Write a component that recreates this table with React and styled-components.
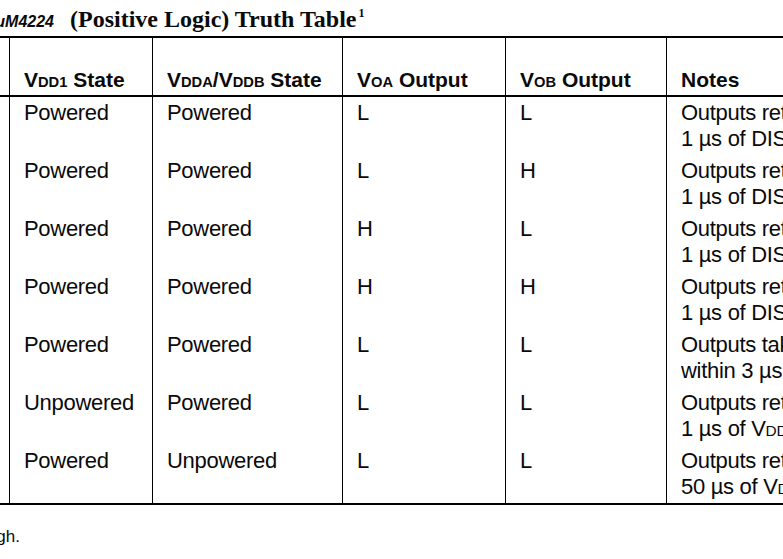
import React from "react";
import styled, { createGlobalStyle } from "styled-components";

const DISABLE_LOW = ["Outputs return to the input state within", "1 µs of DISABLE set low."];

const getRows = () => [
  { vdd1: "Powered", vdda: "Powered", voa: "L", vob: "L", note: DISABLE_LOW },
  { vdd1: "Powered", vdda: "Powered", voa: "L", vob: "H", note: DISABLE_LOW },
  { vdd1: "Powered", vdda: "Powered", voa: "H", vob: "L", note: DISABLE_LOW },
  { vdd1: "Powered", vdda: "Powered", voa: "H", vob: "H", note: DISABLE_LOW },
  { vdd1: "Powered", vdda: "Powered", voa: "L", vob: "L", note: ["Outputs take on default low state", "within 3 µs of DISABLE set high."] },
  { vdd1: "Unpowered", vdda: "Powered", voa: "L", vob: "L", note: ["Outputs return to the input state within", <>1 µs of V<Sub>DD1</Sub> power restoration.</>] },
  { vdd1: "Powered", vdda: "Unpowered", voa: "L", vob: "L", note: ["Outputs return to the input state within", <>50 µs of V<Sub>DDA</Sub>/V<Sub>DDB</Sub> power restoration.</>] },
];

const App = () => {
  const rows = getRows();
  return (
    <>
      <GlobalStyle />
      <Page>
        <Title>
          <PartNo>
            <span>ADuM4224</span>
          </PartNo>
          <Caption>
            (Positive Logic) Truth Table<Sup>1</Sup>
          </Caption>
        </Title>
        <Table>
          <HeadCell $first />
          <HeadCell>
            <span>
              V<Sub>DD1</Sub> State
            </span>
          </HeadCell>
          <HeadCell>
            <span>
              V<Sub>DDA</Sub>/V<Sub>DDB</Sub> State
            </span>
          </HeadCell>
          <HeadCell>
            <span>
              V<Sub>OA</Sub> Output
            </span>
          </HeadCell>
          <HeadCell>
            <span>
              V<Sub>OB</Sub> Output
            </span>
          </HeadCell>
          <HeadCell>
            <span>Notes</span>
          </HeadCell>
          {rows.map((r, i) => (
            <React.Fragment key={i}>
              <Cell $first />
              <Cell>{r.vdd1}</Cell>
              <Cell>{r.vdda}</Cell>
              <Cell>{r.voa}</Cell>
              <Cell>{r.vob}</Cell>
              <Cell>
                {r.note.map((line, j) => (
                  <Line key={j}>{line}</Line>
                ))}
              </Cell>
            </React.Fragment>
          ))}
        </Table>
        <Footnote>
          <span>
            <Sup>1</Sup> L = low, H = high.
          </span>
        </Footnote>
      </Page>
    </>
  );
};

const GlobalStyle = createGlobalStyle`
  html, body {
    margin: 0;
    padding: 0;
    background: #fff;
    overflow: hidden;
  }
  body {
    font-family: "Liberation Sans", Arial, sans-serif;
    color: #0a0a0a;
  }
`;

const Page = styled.div`
  width: 783px;
  height: 559px;
  overflow: hidden;
`;

const Title = styled.div`
  box-sizing: border-box;
  display: flex;
  align-items: baseline;
  gap: 16px;
  height: 36px;
  padding-top: 4px;
  line-height: 30px;
`;

const PartNo = styled.div`
  width: 54px;
  display: flex;
  justify-content: flex-end;
  white-space: nowrap;
  font-family: "Liberation Sans", Arial, sans-serif;
  font-weight: bold;
  font-style: italic;
  font-size: 16px;
`;

const Caption = styled.div`
  white-space: nowrap;
  font-family: "Liberation Serif", "Times New Roman", serif;
  font-weight: bold;
  font-size: 24px;
`;

const Sup = styled.sup`
  font-size: 0.5em;
  vertical-align: 0.8em;
  line-height: 0;
  margin-left: 2px;
`;

const Sub = styled.span`
  font-size: 0.7em;
  line-height: 1;
`;

const Table = styled.div`
  display: grid;
  grid-template-columns: 9px 143px 190px 163px 161px 420px;
  grid-template-rows: 59px;
  grid-auto-rows: 58px;
  border-top: 2px solid #000;
  border-bottom: 2px solid #000;
`;

const HeadCell = styled.div`
  display: flex;
  align-items: flex-end;
  padding: 0 0 3px 14px;
  border-left: ${(p) => (p.$first ? "none" : "1px solid #000")};
  border-bottom: 2px solid #000;
  font-weight: bold;
  font-size: 21px;
  line-height: 24px;
  white-space: nowrap;
`;

const Cell = styled.div`
  padding: 3px 0 0 14px;
  border-left: ${(p) => (p.$first ? "none" : "1px solid #000")};
  font-size: 22px;
  line-height: 26px;
  letter-spacing: -0.3px;
  white-space: nowrap;
`;

const Line = styled.div``;

const Footnote = styled.div`
  width: 20px;
  display: flex;
  justify-content: flex-end;
  margin-top: 22px;
  white-space: nowrap;
  font-size: 17px;
  line-height: 20px;
`;

export default App;
